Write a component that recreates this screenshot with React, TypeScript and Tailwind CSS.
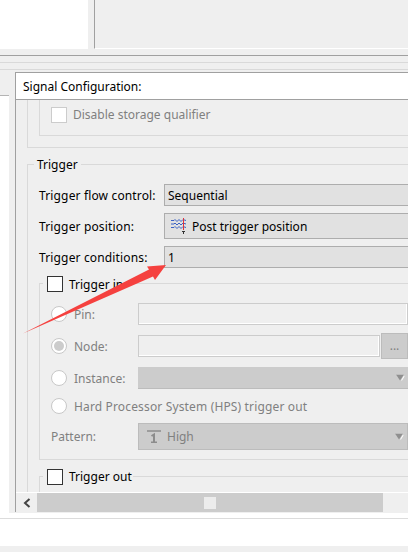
const font = "font-['Noto_Sans','Liberation_Sans',sans-serif]";

function Checkbox({ disabled = false }: { disabled?: boolean }) {
  return (
    <span className={`block w-[16px] h-[16px] shrink-0 bg-white border ${disabled ? "border-[#cccccc]" : "border-[#333333]"}`} />
  );
}

function Radio({ checked = false }: { checked?: boolean }) {
  return (
    <span className="flex items-center justify-center w-[16px] h-[16px] shrink-0 rounded-full bg-white border border-[#c8c8c8]">
      {checked && <span className="block w-[10px] h-[10px] rounded-full bg-[#cccccc]" />}
    </span>
  );
}

function TriggerSelect({ className, children }: { className: string; children: React.ReactNode }) {
  return (
    <div className={`flex items-center w-[260px] shrink-0 pl-[3px] bg-[#e1e1e1] border border-[#adadad] text-[12px] text-black ${className}`}>
      {children}
    </div>
  );
}

function DisabledArrow() {
  return (
    <svg width="9" height="7" viewBox="0 0 9 7" className="absolute right-[3px] top-1/2 -translate-y-1/2">
      <path d="M0 0H8L4 6Z" fill="#8f8f8f" />
      <path d="M8 1L5 6H6L8.5 2Z" fill="#ffffff" />
    </svg>
  );
}

function RadioRow({ label, checked, children, className }: { label: string; checked?: boolean; children?: React.ReactNode; className: string }) {
  return (
    <div className={`flex items-center pl-[11px] ${className}`}>
      <Radio checked={checked} />
      <span className="ml-[7px] w-[64px] shrink-0 pt-[2px] text-[12px] text-[#808080] whitespace-nowrap">{label}</span>
      {children}
    </div>
  );
}

const disabledInput = "block h-[22px] bg-[#efefef] border border-[#cccccc] shadow-[inset_-1px_-1px_0_#ffffff]";
const triggerLabel = "w-[125px] shrink-0 pt-[2px] text-[12px] tracking-[0.15px] text-black whitespace-nowrap";

export default function App() {
  return (
    <div className={`relative w-[408px] h-[552px] overflow-hidden bg-[#efefef] ${font}`}>
      {/* window above the dock */}
      <div className="flex h-[49px]">
        <div className="w-[88px] bg-white" />
        <div className="w-[6px]" />
        <div className="flex-1 h-[49px] border-l border-[#a0a0a0] border-b border-b-white" />
      </div>
      <div className="h-[6px]" />
      <div className="h-[7px] border-t border-[#a0a0a0]" />
      <div className="h-[7px] border-t border-[#d9d9d9]" />
      <div className="h-[3px] border-t border-[#d9d9d9]" />

      <div className="flex h-[441px]">
        <div className="w-[9px] shrink-0 flex flex-col">
          <div className="h-[24px] border-b border-[#b4b4b4]" />
          <div className="flex-1 bg-white" />
        </div>
        <div className="w-[6px] shrink-0" />
        <div className="flex-1 min-w-0 flex flex-col items-stretch">
          <div className="h-[440px] border-l border-t border-[#a0a0a0] overflow-hidden flex flex-col">
            <div className="h-[27px] shrink-0 pl-[7px] pt-[2px] flex items-center bg-white border-b border-[#a0a0a0] text-[12px] text-black">
              Signal Configuration:
            </div>

            <div className="h-[392px] shrink-0 overflow-hidden">
              {/* end of the storage section */}
              <div className="ml-[11px] w-[500px] h-[48px] border-l border-b border-[#d9d9d9]">
                <div className="ml-[11px] h-[36px] border-l border-b border-[#d9d9d9] pl-[11px] pt-[7px] flex items-start">
                  <Checkbox disabled />
                  <span className="ml-[6px] text-[12px] leading-[16px] text-[#808080] whitespace-nowrap">Disable storage qualifier</span>
                </div>
              </div>

              {/* Trigger */}
              <div className="mt-[16px] ml-[11px] w-[500px] border-l border-t border-[#d9d9d9]">
                <div className="-mt-[10px] ml-[6px] w-fit h-[19px] px-[3px] bg-[#efefef] text-[12px] leading-[19px] text-black">Trigger</div>

                <div className="mt-[10px] ml-[11px] flex flex-col gap-[7px]">
                  <div className="flex items-center">
                    <span className={triggerLabel}>Trigger flow control:</span>
                    <TriggerSelect className="h-[22px]"><span className="pt-[2px]">Sequential</span></TriggerSelect>
                  </div>
                  <div className="flex items-center">
                    <span className={triggerLabel}>Trigger position:</span>
                    <TriggerSelect className="h-[26px]">
                      <svg width="18" height="16" viewBox="0 0 18 16" className="mr-[4px] ml-[2px] shrink-0" fill="none">
                        <path d="M1 2.5H4L5 1.5L7 3.5L9 1.5L11 3.5L13 1.5L16 2.5" stroke="#3a62c4" />
                        <path d="M1 6H4L5 5L7 7L9 5L11 7L13 5L16 6" stroke="#3a62c4" />
                        <path d="M1 9.5H4L5 8.5L7 10.5L9 8.5L11 10.5L13 8.5L16 9.5" stroke="#3a62c4" />
                        <path d="M13.5 0V12" stroke="#e0343c" />
                        <path d="M12 13.5H15M13.5 13.5V16" stroke="#333333" />
                      </svg>
                      <span className="pt-[2px]">Post trigger position</span>
                    </TriggerSelect>
                  </div>
                  <div className="flex items-center">
                    <span className={triggerLabel}>Trigger conditions:</span>
                    <TriggerSelect className="h-[22px]"><span className="pt-[2px]">1</span></TriggerSelect>
                  </div>
                </div>

                {/* Trigger in */}
                <div className="mt-[15px] ml-[11px] border-l border-t border-b border-[#d9d9d9] pb-[9px]">
                  <div className="-mt-[8px] ml-[3px] w-fit h-[16px] pl-[4px] pr-[1px] flex items-center gap-[6px] bg-[#efefef]">
                    <Checkbox />
                    <span className="pt-[2px] text-[12px] text-black whitespace-nowrap">Trigger in</span>
                  </div>

                  <RadioRow label="Pin:" className="mt-[11px] h-[22px]">
                    <span className={`${disabledInput} w-[270px]`} />
                  </RadioRow>
                  <RadioRow label="Node:" checked className="mt-[8px] h-[26px]">
                    <span className={`${disabledInput} w-[242px]`} />
                    <span className="ml-[1px] w-[27px] h-[26px] flex items-center justify-center bg-[#cccccc] border border-[#bcbcbc] text-[12px] text-[#808080]">...</span>
                  </RadioRow>
                  <RadioRow label="Instance:" className="mt-[8px] h-[22px]">
                    <span className="relative block w-[270px] h-[22px] bg-[#cccccc] border-b border-[#bcbcbc]">
                      <DisabledArrow />
                    </span>
                  </RadioRow>
                  <div className="mt-[6px] h-[22px] pl-[11px] flex items-center">
                    <Radio />
                    <span className="ml-[7px] pt-[2px] text-[12px] tracking-[0.15px] text-[#808080] whitespace-nowrap">Hard Processor System (HPS) trigger out</span>
                  </div>
                  <div className="mt-[6px] h-[27px] pl-[11px] flex items-center">
                    <span className="w-[87px] shrink-0 text-[12px] text-[#808080]">Pattern:</span>
                    <span className="relative flex items-center w-[270px] h-[27px] pl-[8px] bg-[#cccccc] border border-[#bcbcbc] text-[12px] text-[#808080]">
                      <svg width="14" height="13" viewBox="0 0 14 13" className="mr-[6px] shrink-0" fill="none">
                        <path d="M0 1H14" stroke="#8c8c8c" strokeWidth="1.5" />
                        <path d="M4.5 6L7 4.5V12.5M4 12.5H10" stroke="#8c8c8c" strokeWidth="2" />
                      </svg>
                      High
                      <DisabledArrow />
                    </span>
                  </div>
                </div>

                {/* Trigger out */}
                <div className="mt-[16px] ml-[11px] h-[40px] border-l border-t border-[#d9d9d9]">
                  <div className="-mt-[8px] ml-[3px] w-fit h-[16px] pl-[4px] pr-[1px] flex items-center gap-[6px] bg-[#efefef]">
                    <Checkbox />
                    <span className="text-[12px] text-black whitespace-nowrap">Trigger out</span>
                  </div>
                </div>
              </div>
            </div>

            {/* horizontal scroll bar */}
            <div className="h-[20px] shrink-0 flex border-t border-white">
              <div className="w-[21px] flex items-center justify-center">
                <svg width="8" height="10" viewBox="0 0 8 10" fill="none">
                  <path d="M6.5 1L2 5L6.5 9" stroke="#444444" strokeWidth="2" />
                </svg>
              </div>
              <div className="w-[346px] flex items-center justify-center bg-[#cccccc]">
                <span className="block w-[12px] h-[12px] bg-[#ececec]" />
              </div>
            </div>
          </div>
        </div>
      </div>

      <div className="h-[6px] bg-white border-b border-[#dcdcdc]" />
      <div className="h-[27px] bg-white" />

      {/* red annotation arrow */}
      <svg width="408" height="552" className="absolute left-0 top-0 pointer-events-none">
        <path d="M23 333.5L149 269.5L147 266.5L166 265L155 280L153 276.5Z" fill="#f5413f" />
      </svg>
    </div>
  );
}
